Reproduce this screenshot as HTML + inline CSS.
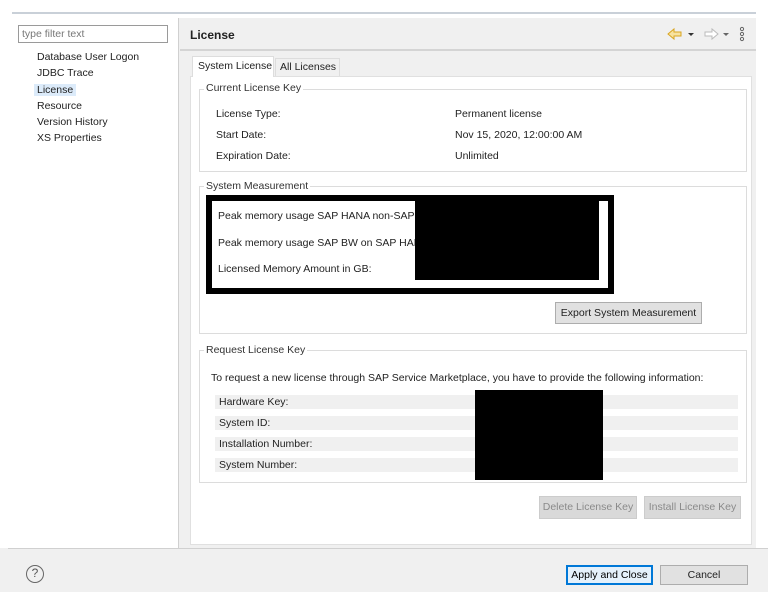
<!DOCTYPE html>
<html><head><meta charset="utf-8"><style>
*{margin:0;padding:0;box-sizing:border-box}
body{width:768px;height:592px;background:#fff;position:relative;overflow:hidden;font-family:"Liberation Sans",sans-serif;font-size:10.5px;color:#222}
.a{position:absolute;white-space:nowrap}
.grp{position:absolute;border:1px solid #dcdcdc;background:#fff}
.leg{position:absolute;background:#fff;padding:0 2px;color:#333}
.row{position:absolute;background:#f0f0f0;height:14px;left:215px;width:523px}
.btn{position:absolute;border:1px solid #adadad;background:#e1e1e1;text-align:center;line-height:19px;font-size:10.5px}
</style></head><body>
<div class="a" style="left:12px;top:12px;width:744px;height:2px;background:#c9d0d8"></div>
<div class="a" style="left:18px;top:25px;width:150px;height:18px;border:1px solid #9a9a9a;padding:2px 3px;color:#777;font-size:10.5px">type filter text</div>
<div class="a" style="left:37px;top:49px;line-height:16.3px;font-size:10.5px">Database User Logon<br>JDBC Trace<br><span style="background:#dcebfa;margin-left:-3px;padding:0 3px">License</span><br>Resource<br>Version History<br>XS Properties</div>
<div class="a" style="left:178px;top:18px;width:1px;height:530px;background:#d0d0d0"></div>
<div class="a" style="left:179px;top:18px;width:577px;height:530px;background:#f0f0f0"></div>
<div class="a" style="left:190px;top:28px;font-weight:bold;font-size:12px">License</div>
<div class="a" style="left:180px;top:49px;width:576px;height:2px;background:#d4d4d4"></div>
<svg class="a" style="left:666px;top:26px" width="82" height="16"><path d="M2 8 L8 3 V6 H15 V10 H8 V13 Z" fill="#f7e2a0" stroke="#d9a520"/><path d="M22 7 h6 l-3 3z" fill="#333"/><path d="M52 8 L46 3 V6 H39 V10 H46 V13 Z" fill="#fff" stroke="#bbb"/><path d="M57 7 h6 l-3 3z" fill="#666"/><circle cx="76" cy="3" r="1.6" fill="none" stroke="#666"/><circle cx="76" cy="8" r="1.6" fill="none" stroke="#666"/><circle cx="76" cy="13" r="1.6" fill="none" stroke="#666"/></svg>
<div class="a" style="left:190px;top:76px;width:562px;height:469px;background:#fff;border:1px solid #e0e0e0"></div>
<div class="a" style="left:192px;top:56px;width:82px;height:21px;background:#fff;border:1px solid #ddd;border-bottom:none;padding:3px 5px">System License</div>
<div class="a" style="left:275px;top:58px;width:65px;height:18px;background:#f0f0f0;border:1px solid #ddd;border-bottom:none;padding:2px 4px">All Licenses</div>

<div class="grp" style="left:199px;top:89px;width:548px;height:83px"></div>
<div class="leg" style="left:204px;top:82px">Current License Key</div>
<div class="a" style="left:216px;top:104px;line-height:21px">License Type:<br>Start Date:<br>Expiration Date:</div>
<div class="a" style="left:455px;top:104px;line-height:21px">Permanent license<br>Nov 15, 2020, 12:00:00 AM<br>Unlimited</div>

<div class="grp" style="left:199px;top:186px;width:548px;height:148px"></div>
<div class="leg" style="left:204px;top:180px">System Measurement</div>
<div class="a" style="left:206px;top:195px;width:408px;height:99px;border:6px solid #000;background:#fff"></div>
<div class="a" style="left:218px;top:203px;line-height:26.5px">Peak memory usage SAP HANA non-SAP<br>Peak memory usage SAP BW on SAP HANA<br>Licensed Memory Amount in GB:</div>
<div class="a" style="left:415px;top:197px;width:184px;height:83px;background:#000"></div>
<div class="btn" style="left:555px;top:302px;width:147px;height:22px;line-height:20px">Export System Measurement</div>

<div class="grp" style="left:199px;top:350px;width:548px;height:133px"></div>
<div class="leg" style="left:204px;top:344px">Request License Key</div>
<div class="a" style="left:211px;top:372px">To request a new license through SAP Service Marketplace, you have to provide the following information:</div>
<div class="row" style="top:395px"></div><div class="row" style="top:416px"></div><div class="row" style="top:437px"></div><div class="row" style="top:458px"></div>
<div class="a" style="left:219px;top:392px;line-height:21px">Hardware Key:<br>System ID:<br>Installation Number:<br>System Number:</div>
<div class="a" style="left:475px;top:390px;width:128px;height:90px;background:#000"></div>
<div class="btn" style="left:539px;top:496px;width:98px;height:23px;background:#d9d9d9;border-color:#ccc;color:#8a8a8a;line-height:21px">Delete License Key</div>
<div class="btn" style="left:644px;top:496px;width:97px;height:23px;background:#d9d9d9;border-color:#ccc;color:#8a8a8a;line-height:21px">Install License Key</div>

<div class="a" style="left:0;top:548px;width:768px;height:44px;background:#f0f0f0"></div>
<div class="a" style="left:8px;top:548px;width:760px;height:1px;background:#d0d0d0"></div>
<div class="a" style="left:26px;top:565px;width:18px;height:18px;border:1.5px solid #666;border-radius:50%;text-align:center;line-height:15px;font-size:12px;color:#555">?</div>
<div class="btn" style="left:566px;top:565px;width:87px;height:20px;line-height:17px;background:#e5f1fb;border:2px solid #0078d7;color:#000">Apply and Close</div>
<div class="btn" style="left:660px;top:565px;width:88px;height:20px;line-height:18px">Cancel</div>
</body></html>
